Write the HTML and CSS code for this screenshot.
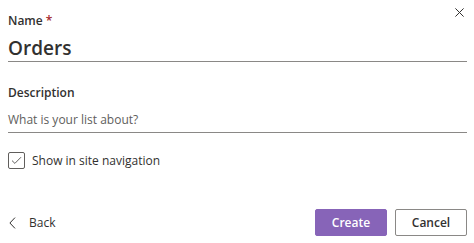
FILE: index.html
```html
<!DOCTYPE html>
<html>
<head>
<meta charset="utf-8">
<link rel="stylesheet" href="styles.css">
</head>
<body>
<div class="panel">
  <button class="close" aria-label="Close">
    <svg width="9" height="9" viewBox="0 0 9 9"><path d="M0.4 0.4L8.6 8.6M8.6 0.4L0.4 8.6" stroke="#323130" stroke-width="1" fill="none"/></svg>
  </button>
  <div class="field name-field">
    <label class="label">Name <span class="req">*</span></label>
    <div class="input big">Orders</div>
  </div>
  <div class="field desc-field">
    <label class="label">Description</label>
    <div class="input placeholder">What is your list about?</div>
  </div>
  <div class="check-row">
    <span class="box">
      <svg width="11" height="9" viewBox="0 0 11 9"><path d="M1 4.6L3.9 7.4L10 1.2" stroke="#605e5c" stroke-width="1" fill="none"/></svg>
    </span>
    <span class="check-text">Show in site navigation</span>
  </div>
  <div class="footer">
    <div class="back">
      <svg width="7" height="12" viewBox="0 0 7 12"><path d="M6 0.6L0.9 6L6 11.4" stroke="#323130" stroke-width="1" fill="none"/></svg>
      <span>Back</span>
    </div>
    <div class="actions">
      <button class="btn primary">Create</button>
      <button class="btn secondary">Cancel</button>
    </div>
  </div>
</div>
</body>
</html>
```
FILE: styles.css
```css
html, body {
  margin: 0;
  padding: 0;
  background: #ffffff;
}
body {
  font-family: "Open Sans", "Noto Sans", sans-serif;
  color: #323130;
  width: 474px;
  height: 243px;
  overflow: hidden;
}
.panel {
  position: relative;
  padding: 13px 7px 0 8px;
  display: flex;
  flex-direction: column;
  height: 243px;
  box-sizing: border-box;
}
.close {
  position: absolute;
  top: 8px;
  left: 455px;
  width: 9px;
  height: 9px;
  padding: 0;
  border: none;
  background: none;
  display: flex;
}
.field {
  display: flex;
  flex-direction: column;
}
.label {
  font-size: 12px;
  font-weight: 600;
  line-height: 16px;
}
.req {
  color: #a4262c;
}
.input {
  border-bottom: 1px solid #8a8886;
}
.big {
  font-size: 19px;
  font-weight: 600;
  line-height: 24px;
  padding-bottom: 1px;
  margin-top: 7px;
}
.desc-field {
  margin-top: 23px;
}
.placeholder {
  font-size: 12px;
  color: #605e5c;
  line-height: 16px;
  margin-top: 11px;
  padding-bottom: 4px;
}
.check-row {
  display: flex;
  align-items: center;
  gap: 7px;
  margin-top: 19px;
}
.box {
  width: 17px;
  height: 17px;
  box-sizing: border-box;
  border: 1px solid #605e5c;
  border-radius: 2px;
  display: flex;
  align-items: center;
  justify-content: center;
}
.check-text {
  font-size: 12px;
  line-height: 16px;
}
.footer {
  margin-top: auto;
  margin-bottom: 7px;
  display: flex;
  align-items: center;
  justify-content: space-between;
}
.back {
  display: flex;
  align-items: center;
  gap: 13px;
  font-size: 12px;
  line-height: 16px;
  padding-left: 1px;
}
.actions {
  display: flex;
  gap: 8px;
}
.btn {
  width: 72px;
  height: 27px;
  border-radius: 2px;
  font-family: "Open Sans", "Noto Sans", sans-serif;
  font-size: 12px;
  font-weight: 600;
  padding: 0;
  box-sizing: border-box;
}
.primary {
  background: #8764b8;
  color: #ffffff;
  border: 1px solid #8764b8;
}
.secondary {
  background: #ffffff;
  color: #323130;
  border: 1px solid #8a8886;
}
```
